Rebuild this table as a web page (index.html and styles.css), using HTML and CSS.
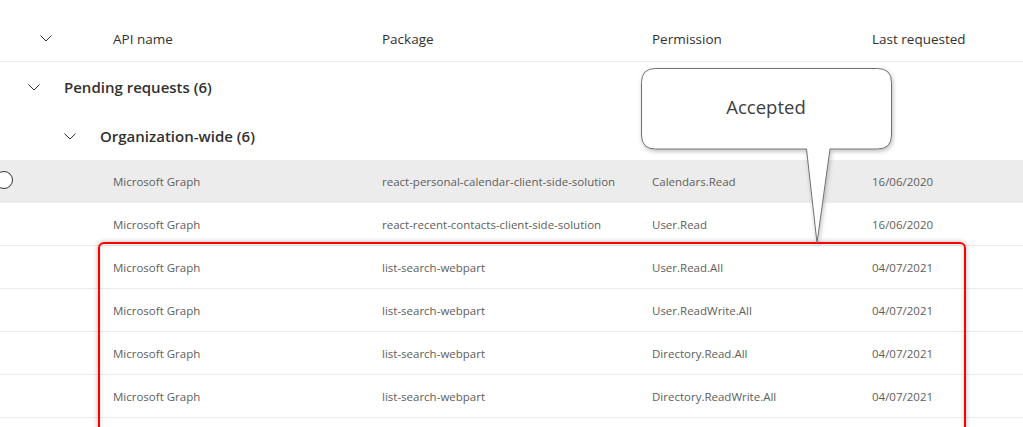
FILE: index.html
```html
<!DOCTYPE html>
<html lang="en">
<head>
<meta charset="utf-8">
<title>API access</title>
<link rel="stylesheet" href="styles.css">
</head>
<body>
<div class="list">
  <div class="row head">
    <div class="cell lead"><svg class="chev hchev" viewBox="0 0 12 7"><path d="M0.5 0.5 L6 6 L11.5 0.5"/></svg></div>
    <div class="cell">API name</div>
    <div class="cell">Package</div>
    <div class="cell">Permission</div>
    <div class="cell">Last requested</div>
  </div>
  <div class="group g1">
    <svg class="chev" viewBox="0 0 12 7"><path d="M0.5 0.5 L6 6 L11.5 0.5"/></svg>
    <span>Pending requests (6)</span>
  </div>
  <div class="group g2">
    <svg class="chev" viewBox="0 0 12 7"><path d="M0.5 0.5 L6 6 L11.5 0.5"/></svg>
    <span>Organization-wide (6)</span>
  </div>
  <div class="row item hover">
    <div class="cell lead"><span class="radio"></span></div>
    <div class="cell">Microsoft Graph</div>
    <div class="cell">react-personal-calendar-client-side-solution</div>
    <div class="cell">Calendars.Read</div>
    <div class="cell">16/06/2020</div>
  </div>
  <div class="row item">
    <div class="cell lead"></div>
    <div class="cell">Microsoft Graph</div>
    <div class="cell">react-recent-contacts-client-side-solution</div>
    <div class="cell">User.Read</div>
    <div class="cell">16/06/2020</div>
  </div>
  <div class="row item">
    <div class="cell lead"></div>
    <div class="cell">Microsoft Graph</div>
    <div class="cell">list-search-webpart</div>
    <div class="cell">User.Read.All</div>
    <div class="cell">04/07/2021</div>
  </div>
  <div class="row item">
    <div class="cell lead"></div>
    <div class="cell">Microsoft Graph</div>
    <div class="cell">list-search-webpart</div>
    <div class="cell">User.ReadWrite.All</div>
    <div class="cell">04/07/2021</div>
  </div>
  <div class="row item">
    <div class="cell lead"></div>
    <div class="cell">Microsoft Graph</div>
    <div class="cell">list-search-webpart</div>
    <div class="cell">Directory.Read.All</div>
    <div class="cell">04/07/2021</div>
  </div>
  <div class="row item">
    <div class="cell lead"></div>
    <div class="cell">Microsoft Graph</div>
    <div class="cell">list-search-webpart</div>
    <div class="cell">Directory.ReadWrite.All</div>
    <div class="cell">04/07/2021</div>
  </div>
</div>

<div class="highlight"></div>

<svg class="callout" viewBox="630 60 280 190" width="280" height="190">
  <defs>
    <filter id="sh" x="-10%" y="-10%" width="120%" height="120%">
      <feDropShadow dx="1" dy="2" stdDeviation="2" flood-color="#000" flood-opacity="0.25"/>
    </filter>
  </defs>
  <path filter="url(#sh)" d="M655.5 68.5 H877.5 Q891.5 68.5 891.5 82.5 V135 Q891.5 149 877.5 149 H830 L817 243 L806.5 149 H655.5 Q641.5 149 641.5 135 V82.5 Q641.5 68.5 655.5 68.5 Z"/>
  <text x="766" y="114" text-anchor="middle">Accepted</text>
</svg>
</body>
</html>
```

FILE: styles.css
```css
* { box-sizing: border-box; }

html, body {
  height: 427px;
}

body {
  margin: 0;
  background: #ffffff;
  font-family: "Open Sans", "Noto Sans", sans-serif;
  color: #323130;
  overflow: hidden;
}

.list {
  width: 1023px;
}

.row {
  display: grid;
  grid-template-columns: 113px 269px 270px 220px 1fr;
  align-items: center;
}

.cell {
  white-space: nowrap;
}

.head {
  height: 62px;
  padding-top: 29px;
  border-bottom: 1px solid #edebe9;
  font-size: 13.5px;
  color: #323130;
  align-items: start;
}

.head .cell {
  line-height: 20px;
  height: 20px;
}

.lead {
  position: relative;
  height: 100%;
}

.chev {
  width: 12px;
  height: 7px;
  fill: none;
  stroke: #323130;
  stroke-width: 1;
}

.hchev {
  position: absolute;
  left: 40px;
  top: 6px;
}

.group {
  display: flex;
  align-items: center;
  font-size: 15px;
  font-weight: 600;
  color: #323130;
}

.group .chev {
  margin-right: 24px;
}

.g1 {
  height: 50px;
  padding-left: 28px;
}

.g2 {
  height: 48px;
  padding-left: 64px;
}

.item {
  height: 43px;
  border-bottom: 1px solid #edebe9;
  font-size: 11.5px;
  color: #605e5c;
}

.item.hover {
  background: #ececec;
  border-bottom-color: #ececec;
}

.radio {
  position: absolute;
  left: -5px;
  top: 11px;
  width: 18px;
  height: 18px;
  border: 1px solid #323130;
  border-radius: 50%;
  background: #fff;
}

.highlight {
  position: absolute;
  left: 98px;
  top: 242px;
  width: 868px;
  height: 200px;
  border: 2px solid #ff0000;
  border-radius: 6px;
  box-shadow: 0 0 5px rgba(0, 0, 0, 0.3), inset 0 0 5px rgba(0, 0, 0, 0.15);
}

.callout {
  position: absolute;
  left: 630px;
  top: 60px;
  overflow: visible;
}

.callout path {
  fill: #ffffff;
  stroke: #707070;
  stroke-width: 1;
}

.callout text {
  font-family: "Open Sans", "Noto Sans", sans-serif;
  font-size: 18.5px;
  fill: #404040;
}
```
